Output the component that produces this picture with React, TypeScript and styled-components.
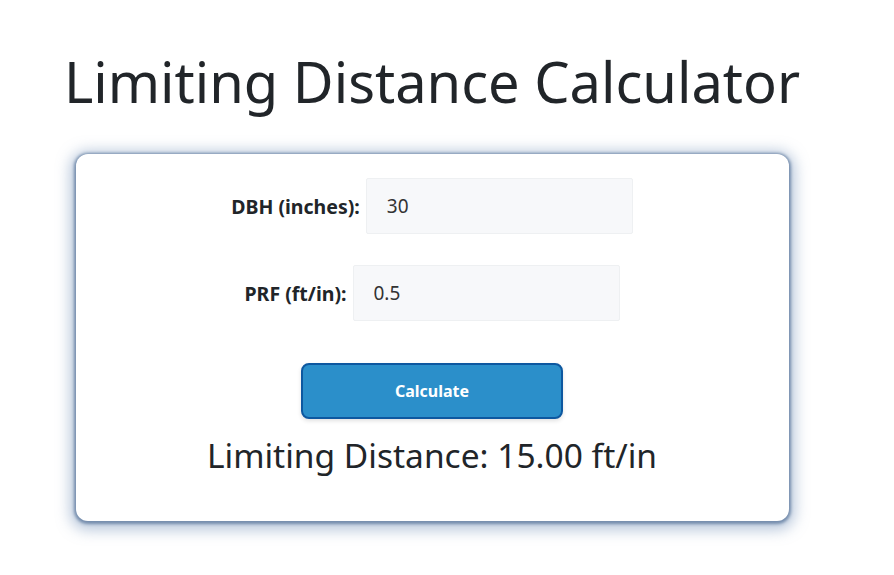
import React, { useState } from 'react'
import styled, { createGlobalStyle } from 'styled-components'

const GlobalStyle = createGlobalStyle`
  html, body {
    margin: 0;
    padding: 0;
    background: #ffffff;
    font-family: "Noto Sans", "Open Sans", Arial, sans-serif;
    color: #212529;
  }
`

const Page = styled.div`
  width: 864px;
  display: flex;
  flex-direction: column;
  align-items: center;
  padding: 40px 0 40px;
`

const Title = styled.h1`
  margin: 0 0 32px;
  font-size: 56px;
  font-weight: 400;
  line-height: 82px;
  color: #212529;
`

const Card = styled.div`
  width: 713px;
  height: 367px;
  box-sizing: border-box;
  background: #ffffff;
  border-radius: 12px;
  box-shadow: 0 1px 3px 2px rgba(105, 130, 165, 0.85), 0 3px 14px 6px rgba(115, 145, 185, 0.5);
  padding: 24px 0 0;
  display: flex;
  flex-direction: column;
  align-items: center;
`

const Row = styled.div<{ $mb: number }>`
  display: flex;
  align-items: center;
  margin-bottom: ${p => p.$mb}px;
`

const Label = styled.label`
  font-size: 19.5px;
  font-weight: 700;
  color: #212529;
  margin-right: 6px;
`

const Field = styled.input`
  width: 267px;
  height: 56px;
  box-sizing: border-box;
  padding: 0 20px;
  background: #f7f8fa;
  border: 1px solid #eef0f2;
  border-radius: 2px;
  font-family: inherit;
  font-size: 19px;
  color: #333;
  outline: none;
`

const Button = styled.button`
  width: 262px;
  height: 56px;
  background: #2b8fca;
  border: 2px solid #0d58a0;
  border-radius: 8px;
  color: #ffffff;
  font-family: inherit;
  font-size: 16px;
  font-weight: 700;
  cursor: pointer;
  box-shadow: 0 2px 4px rgba(0, 0, 0, 0.12);
`

const Result = styled.div`
  margin-top: 14px;
  font-size: 33.5px;
  line-height: 44px;
  color: #212529;
`

export default function App() {
  const [dbh, setDbh] = useState('30')
  const [prf, setPrf] = useState('0.5')
  const [result, setResult] = useState((30 * 0.5).toFixed(2))

  const calc = () => {
    const v = parseFloat(dbh) * parseFloat(prf)
    setResult(isNaN(v) ? '0.00' : v.toFixed(2))
  }

  return (
    <>
      <GlobalStyle />
      <Page>
        <Title>Limiting Distance Calculator</Title>
        <Card>
          <Row $mb={31}>
            <Label htmlFor="dbh">DBH (inches):</Label>
            <Field id="dbh" value={dbh} onChange={e => setDbh(e.target.value)} />
          </Row>
          <Row $mb={42}>
            <Label htmlFor="prf">PRF (ft/in):</Label>
            <Field id="prf" value={prf} onChange={e => setPrf(e.target.value)} />
          </Row>
          <Button onClick={calc}>Calculate</Button>
          <Result>Limiting Distance: {result} ft/in</Result>
        </Card>
      </Page>
    </>
  )
}
